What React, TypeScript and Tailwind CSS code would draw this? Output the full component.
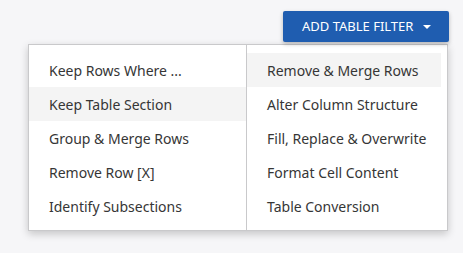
import React from 'react';

const leftItems = ['Keep Rows Where ...', 'Keep Table Section', 'Group & Merge Rows', 'Remove Row [X]', 'Identify Subsections'];
const rightItems = ['Remove & Merge Rows', 'Alter Column Structure', 'Fill, Replace & Overwrite', 'Format Cell Content', 'Table Conversion'];

const App: React.FC = () => {
  return (
    <div
      className="w-[463px] h-[253px] bg-[#f6f6f8] overflow-hidden"
      style={{ fontFamily: '"Noto Sans", "Open Sans", sans-serif' }}
    >
      <div className="flex justify-end pt-[11px] pr-[14px]">
        <button className="flex items-center h-[31px] w-[166px] pl-[19px] bg-[#1f5db0] text-white text-[13px] rounded-[2px] shadow-[0_2px_4px_rgba(0,0,0,0.25)]">
          ADD TABLE FILTER
          <span className="ml-[10px] w-0 h-0 border-l-[4px] border-r-[4px] border-t-[4px] border-l-transparent border-r-transparent border-t-white" />
        </button>
      </div>

      <div className="ml-[28px] mt-[2px] w-[420px] h-[187px] flex bg-white border border-[#c9c9cb] shadow-[0_3px_8px_rgba(0,0,0,0.2)]">
        <ul className="w-[218px] pt-[8px] border-r border-[#c9c9cb]">
          {leftItems.map((item) => (
            <li
              key={item}
              className={`h-[34px] flex items-center pl-[20px] text-[14px] text-[#363636] ${
                item === 'Keep Table Section' ? 'bg-[#f4f4f4]' : ''
              }`}
            >
              {item}
            </li>
          ))}
        </ul>
        <ul className="flex-1 pt-[8px] mr-[6px]">
          {rightItems.map((item) => (
            <li
              key={item}
              className={`h-[34px] flex items-center pl-[20px] text-[14px] text-[#363636] ${
                item === 'Remove & Merge Rows' ? 'bg-[#f4f4f4]' : ''
              }`}
            >
              {item}
            </li>
          ))}
        </ul>
      </div>
    </div>
  );
};

export default App;
